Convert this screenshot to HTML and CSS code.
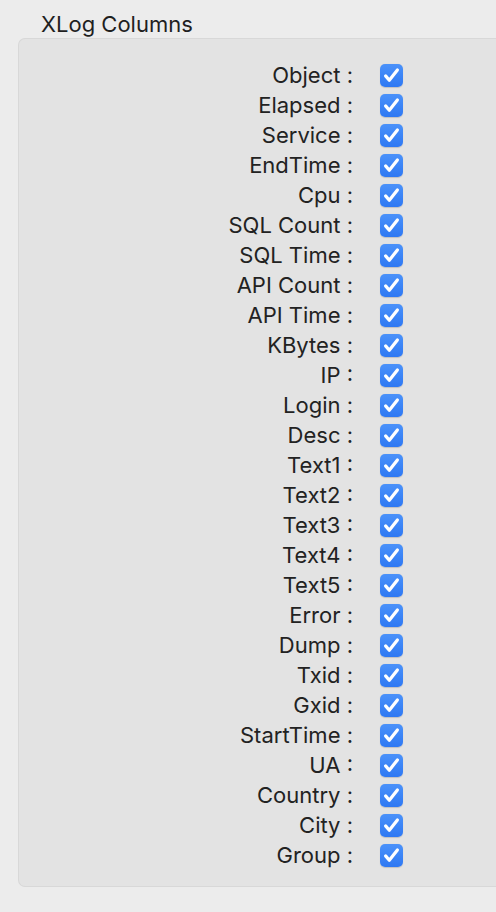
FILE: index.html
```html
<!DOCTYPE html>
<html>
<head>
<meta charset="utf-8">
<link rel="stylesheet" href="styles.css">
</head>
<body>
<div class="page">
  <div class="title">XLog Columns</div>
  <div class="panel">
    <div class="rows" id="rows">
      <div class="row"><span class="label">Object :</span><span class="cb"><svg viewBox="0 0 23 23"><path d="M5.6 11.9 L9.3 16.3 L17.4 5.9"/></svg></span></div>
      <div class="row"><span class="label">Elapsed :</span><span class="cb"><svg viewBox="0 0 23 23"><path d="M5.6 11.9 L9.3 16.3 L17.4 5.9"/></svg></span></div>
      <div class="row"><span class="label">Service :</span><span class="cb"><svg viewBox="0 0 23 23"><path d="M5.6 11.9 L9.3 16.3 L17.4 5.9"/></svg></span></div>
      <div class="row"><span class="label">EndTime :</span><span class="cb"><svg viewBox="0 0 23 23"><path d="M5.6 11.9 L9.3 16.3 L17.4 5.9"/></svg></span></div>
      <div class="row"><span class="label">Cpu :</span><span class="cb"><svg viewBox="0 0 23 23"><path d="M5.6 11.9 L9.3 16.3 L17.4 5.9"/></svg></span></div>
      <div class="row"><span class="label">SQL Count :</span><span class="cb"><svg viewBox="0 0 23 23"><path d="M5.6 11.9 L9.3 16.3 L17.4 5.9"/></svg></span></div>
      <div class="row"><span class="label">SQL Time :</span><span class="cb"><svg viewBox="0 0 23 23"><path d="M5.6 11.9 L9.3 16.3 L17.4 5.9"/></svg></span></div>
      <div class="row"><span class="label">API Count :</span><span class="cb"><svg viewBox="0 0 23 23"><path d="M5.6 11.9 L9.3 16.3 L17.4 5.9"/></svg></span></div>
      <div class="row"><span class="label">API Time :</span><span class="cb"><svg viewBox="0 0 23 23"><path d="M5.6 11.9 L9.3 16.3 L17.4 5.9"/></svg></span></div>
      <div class="row"><span class="label">KBytes :</span><span class="cb"><svg viewBox="0 0 23 23"><path d="M5.6 11.9 L9.3 16.3 L17.4 5.9"/></svg></span></div>
      <div class="row"><span class="label">IP :</span><span class="cb"><svg viewBox="0 0 23 23"><path d="M5.6 11.9 L9.3 16.3 L17.4 5.9"/></svg></span></div>
      <div class="row"><span class="label">Login :</span><span class="cb"><svg viewBox="0 0 23 23"><path d="M5.6 11.9 L9.3 16.3 L17.4 5.9"/></svg></span></div>
      <div class="row"><span class="label">Desc :</span><span class="cb"><svg viewBox="0 0 23 23"><path d="M5.6 11.9 L9.3 16.3 L17.4 5.9"/></svg></span></div>
      <div class="row"><span class="label">Text1 :</span><span class="cb"><svg viewBox="0 0 23 23"><path d="M5.6 11.9 L9.3 16.3 L17.4 5.9"/></svg></span></div>
      <div class="row"><span class="label">Text2 :</span><span class="cb"><svg viewBox="0 0 23 23"><path d="M5.6 11.9 L9.3 16.3 L17.4 5.9"/></svg></span></div>
      <div class="row"><span class="label">Text3 :</span><span class="cb"><svg viewBox="0 0 23 23"><path d="M5.6 11.9 L9.3 16.3 L17.4 5.9"/></svg></span></div>
      <div class="row"><span class="label">Text4 :</span><span class="cb"><svg viewBox="0 0 23 23"><path d="M5.6 11.9 L9.3 16.3 L17.4 5.9"/></svg></span></div>
      <div class="row"><span class="label">Text5 :</span><span class="cb"><svg viewBox="0 0 23 23"><path d="M5.6 11.9 L9.3 16.3 L17.4 5.9"/></svg></span></div>
      <div class="row"><span class="label">Error :</span><span class="cb"><svg viewBox="0 0 23 23"><path d="M5.6 11.9 L9.3 16.3 L17.4 5.9"/></svg></span></div>
      <div class="row"><span class="label">Dump :</span><span class="cb"><svg viewBox="0 0 23 23"><path d="M5.6 11.9 L9.3 16.3 L17.4 5.9"/></svg></span></div>
      <div class="row"><span class="label">Txid :</span><span class="cb"><svg viewBox="0 0 23 23"><path d="M5.6 11.9 L9.3 16.3 L17.4 5.9"/></svg></span></div>
      <div class="row"><span class="label">Gxid :</span><span class="cb"><svg viewBox="0 0 23 23"><path d="M5.6 11.9 L9.3 16.3 L17.4 5.9"/></svg></span></div>
      <div class="row"><span class="label">StartTime :</span><span class="cb"><svg viewBox="0 0 23 23"><path d="M5.6 11.9 L9.3 16.3 L17.4 5.9"/></svg></span></div>
      <div class="row"><span class="label">UA :</span><span class="cb"><svg viewBox="0 0 23 23"><path d="M5.6 11.9 L9.3 16.3 L17.4 5.9"/></svg></span></div>
      <div class="row"><span class="label">Country :</span><span class="cb"><svg viewBox="0 0 23 23"><path d="M5.6 11.9 L9.3 16.3 L17.4 5.9"/></svg></span></div>
      <div class="row"><span class="label">City :</span><span class="cb"><svg viewBox="0 0 23 23"><path d="M5.6 11.9 L9.3 16.3 L17.4 5.9"/></svg></span></div>
      <div class="row"><span class="label">Group :</span><span class="cb"><svg viewBox="0 0 23 23"><path d="M5.6 11.9 L9.3 16.3 L17.4 5.9"/></svg></span></div>
    </div>
  </div>
</div>
</body>
</html>
```
FILE: styles.css
```css
html, body {
  margin: 0;
  padding: 0;
  background: #ececec;
}
body {
  width: 496px;
  height: 912px;
  overflow: hidden;
  font-family: Inter, "Noto Sans", "Liberation Sans", sans-serif;
  color: #222;
}
.page {
  padding-top: 10px;
}
.title {
  margin-left: 41px;
  font-size: 22px;
  line-height: 28px;
  height: 28px;
  color: #1f1f1f;
}
.panel {
  margin-left: 18px;
  width: 478px;
  height: 849px;
  box-sizing: border-box;
  background: #e3e3e3;
  border: 1px solid #d8d8d8;
  border-right: none;
  border-radius: 7px 0 0 7px;
  padding-top: 21px;
}
.rows {
  display: flex;
  flex-direction: column;
}
.row {
  display: flex;
  align-items: center;
  height: 30px;
}
.label {
  width: 334px;
  text-align: right;
  font-size: 22px;
  line-height: 30px;
  color: #222;
}
.cb {
  margin-left: 27px;
  width: 23px;
  height: 23px;
  border-radius: 5px;
  background: linear-gradient(#4b92fa, #2e78f3);
  box-shadow: 0 0.5px 1px rgba(0,0,0,0.15);
  display: flex;
}
.cb svg {
  width: 23px;
  height: 23px;
}
.cb path {
  fill: none;
  stroke: #fff;
  stroke-width: 3.2;
  stroke-linecap: round;
  stroke-linejoin: round;
}
```
